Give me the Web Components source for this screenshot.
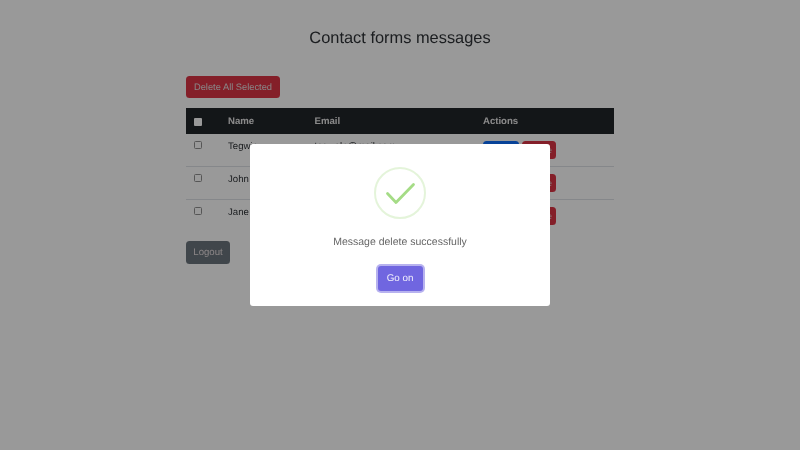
<!DOCTYPE html>
<html><head><meta charset="utf-8"><style>
html,body{margin:0;padding:0;background:#fff;height:100%}
body{font-family:"Liberation Sans",Arial,sans-serif;color:#212529;overflow:hidden;text-rendering:geometricPrecision}
</style></head><body>
<contact-page>
  <msg-row name="Tegwin" email="tegwaln@mail.com"></msg-row>
  <msg-row name="John" email="john@mail.com"></msg-row>
  <msg-row name="Jane" email="jane@mail.com" last></msg-row>
</contact-page>
<success-dialog message="Message delete successfully" action="Go on"></success-dialog>
<script>
const BTN=`.btn{display:inline-flex;align-items:center;justify-content:center;box-sizing:border-box;border:1px solid transparent;border-radius:3.5px;font:9.6px/1.5 "Liberation Sans",Arial,sans-serif;color:#e4dcde;padding:1px 7px 0;margin:0}
.red{background:#dc3545}.blue{background:#0d6efd}.gray{background:#6c757d}`;
const COLS=`display:grid;grid-template-columns:42px 86.5px 168.5px 1fr;`;
class ContactPage extends HTMLElement{
  constructor(){super();this.attachShadow({mode:'open'}).innerHTML=`<style>
:host{display:block;box-sizing:border-box;width:428px;margin:0 auto;padding-top:28px;font:9.6px/1.5 "Liberation Sans",Arial,sans-serif;color:#2f3337;filter:blur(.5px)}
h1{font-size:16.4px;font-weight:400;line-height:21px;margin:0 0 27px;text-align:center}
${BTN}
.del{height:22px;width:94px;margin-bottom:10px;display:flex;white-space:nowrap;font-size:9.3px}
.head{${COLS}height:26px;background:#212529;color:#e6e6e6;font-weight:700;align-items:start;padding-top:7px;box-sizing:border-box;line-height:14px}
.head input{appearance:none;width:8px;height:8px;margin:3px 0 0 7.5px;background:#fff;border-radius:1px;display:block}
.foot{margin-top:8px;height:23px;width:44px;display:flex}
</style>
<h1>Contact forms messages</h1>
<div class="btn red del">Delete All Selected</div>
<div class="head"><input type="checkbox" aria-label="all"><span>Name</span><span>Email</span><span>Actions</span></div>
<slot></slot>
<div class="btn gray foot">Logout</div>`;}
}
class MsgRow extends HTMLElement{
  connectedCallback(){
    const s=this.shadowRoot||this.attachShadow({mode:'open'});
    s.innerHTML=`<style>
:host{display:block;height:33px;box-sizing:border-box;border-bottom:1px solid #dee2e6}
:host([last]){border-bottom:0}
${BTN}
.r{${COLS}align-items:start;padding-top:7px;line-height:10.5px;box-sizing:border-box}
.c{appearance:none;display:block;box-sizing:border-box;width:8px;height:8px;margin:0 0 0 7.5px;background:#fff;border:1px solid #8f8f8f;border-radius:1.5px}
.t{line-height:12px;white-space:nowrap}
.a{display:flex;gap:3px}
.a .btn{height:18px;font-size:9px}
.e{width:36px}.d{width:34px}
</style><div class="r"><input class="c" type="checkbox" aria-label="select"><span class="t">${this.getAttribute('name')}</span><span class="t">${this.getAttribute('email')}</span><span class="a"><span class="btn blue e">Edit</span><span class="btn red d">Delete</span></span></div>`;
  }
}
class SuccessDialog extends HTMLElement{
  connectedCallback(){
    const s=this.shadowRoot||this.attachShadow({mode:'open'});
    s.innerHTML=`<style>
:host{position:fixed;inset:0;background:rgba(0,0,0,.4);display:flex;align-items:flex-start;justify-content:center;font-family:"Liberation Sans",Arial,sans-serif}
.m{margin-top:144px;width:300px;height:162px;box-sizing:border-box;background:#fff;border-radius:3px;display:flex;flex-direction:column;align-items:center;padding-top:23px;filter:blur(.4px)}
svg{display:block;width:52px;height:52px}
p{margin:16px 0 0;font-size:10.5px;line-height:14px;color:#666;text-align:center}
.go{margin-top:17px;width:45px;height:25px;box-sizing:border-box;display:flex;align-items:center;justify-content:center;background:#7066e0;color:#f4f3fd;font-size:9.8px;border-radius:3px;box-shadow:0 0 0 2px rgba(112,102,224,.5)}
</style><div class="m"><svg viewBox="0 0 52 52" aria-hidden="true"><circle cx="26" cy="26" r="25" fill="none" stroke="#a5dc86" stroke-opacity=".3" stroke-width="2"/><path d="M13.5 26.5 L22 35.5 L39.5 17.5" fill="none" stroke="#a5dc86" stroke-width="2.8" stroke-linecap="round" stroke-linejoin="round"/></svg><p>${this.getAttribute('message')}</p><div class="go">${this.getAttribute('action')}</div></div>`;
  }
}
customElements.define('contact-page',ContactPage);
customElements.define('msg-row',MsgRow);
customElements.define('success-dialog',SuccessDialog);
</script>
</body></html>
